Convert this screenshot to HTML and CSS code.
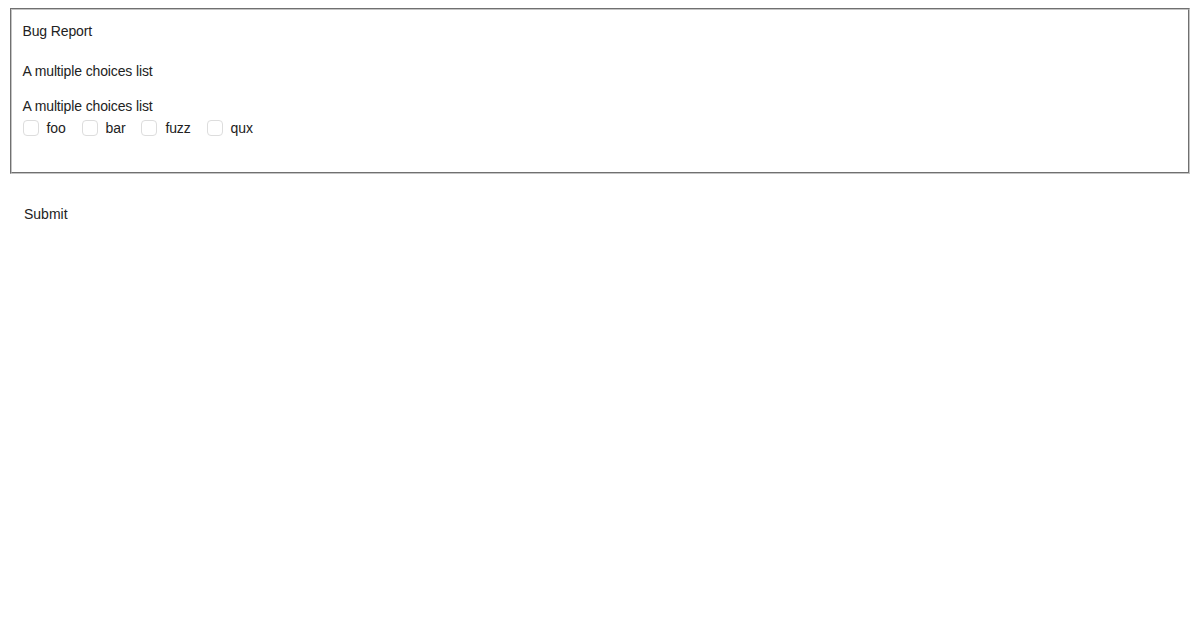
FILE: index.html
```html
<!DOCTYPE html>
<html>
<head>
    <meta charset="UTF-8">
    <title>Bug Report</title>
    <link rel="stylesheet" href="styles.css">
</head>
<body>
    <form class="report">
        <fieldset class="report-box">
            <div class="report-title">Bug Report</div>
            <div class="field-desc">A multiple choices list</div>
            <div class="field">
                <div class="field-label">A multiple choices list</div>
                <div class="choices">
                    <label class="choice"><input type="checkbox" name="c" value="foo"><span>foo</span></label>
                    <label class="choice"><input type="checkbox" name="c" value="bar"><span>bar</span></label>
                    <label class="choice"><input type="checkbox" name="c" value="fuzz"><span>fuzz</span></label>
                    <label class="choice"><input type="checkbox" name="c" value="qux"><span>qux</span></label>
                </div>
            </div>
        </fieldset>
        <div class="actions">
            <button type="submit" class="submit">Submit</button>
        </div>
    </form>
</body>
</html>
```

FILE: styles.css
```css
body { margin: 8px; font-family: "Liberation Sans", Arial, sans-serif; font-size: 14px; letter-spacing: -0.13px; color: #222;}
.report-box {
    margin: 0 2px;
    padding: 5px 10.5px 8px;
    border: 2px groove #c4c4c4;
}
.report-title {
    padding-top: 6px;
    line-height: 20px;
}
.field-desc {
    margin-top: 20px;
    line-height: 20px;
}
.field {
    margin-top: 15px;
    margin-bottom: 24px;
}
.field-label { line-height: 20px;}
.choices {
    display: flex;
    gap: 16px;
    height: 24px;
    align-items: center;
}
.choice {
    display: flex;
    align-items: center;
    gap: 8px;
}
.choice input {
    appearance: none;
    margin: 0;
    width: 16px;
    height: 16px;
    border: 1px solid #ddd;
    border-radius: 4px;
    background: #fff;
}
.actions {
    margin-top: 29px;
    padding: 0 16px;
}
.submit {
    font: inherit;
    color: #222;
    background: none;
    border: none;
    padding: 0;
    height: 22px;
}
```
